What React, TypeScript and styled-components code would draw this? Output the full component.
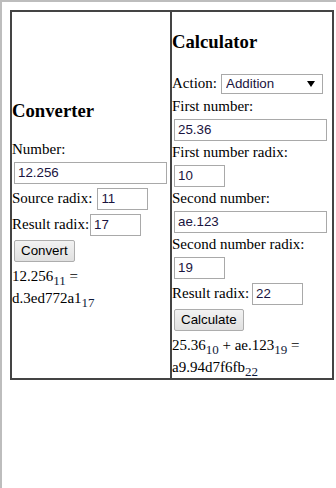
import styled, { createGlobalStyle } from 'styled-components'

const GlobalStyle = createGlobalStyle`
  html, body {
    margin: 0;
    padding: 0;
    background: #fff;
  }
  body {
    font-family: 'Liberation Serif', 'Times New Roman', serif;
    font-size: 15px;
    color: #000;
  }
`

const Frame = styled.div`
  box-sizing: border-box;
  min-height: 100vh;
  border-top: 2px solid #bdbdbd;
  border-left: 2px solid #bdbdbd;
  padding: 8px;
`

const Layout = styled.table`
  border-collapse: collapse;
  border: 2px solid #444;
  table-layout: fixed;
  width: 322px;
`

const Cell = styled.td<{ $width: number }>`
  border: 2px solid #444;
  padding: 0;
  width: ${({ $width }) => $width}px;
  vertical-align: middle;
`

const Title = styled.h3`
  margin: 18.72px 0;
  font-size: 18.72px;
  line-height: 21.5px;
  font-weight: bold;
`

const Line = styled.div<{ $h?: number }>`
  display: flex;
  align-items: center;
  height: ${({ $h }) => $h ?? 26}px;
  white-space: nowrap;
  font-size: 15px;
`

const Field = styled.input<{ $w: number; $ml?: number }>`
  box-sizing: border-box;
  width: ${({ $w }) => $w}px;
  height: 22px;
  margin: 0 0 0 ${({ $ml }) => $ml ?? 2}px;
  padding: 0 3px;
  border: 1px solid #a9a9a9;
  font-family: 'Liberation Sans', Arial, sans-serif;
  font-size: 13.33px;
  color: #1a1440;
  background: #fff;
  outline: none;
`

const SelectWrap = styled.span<{ $ml: number }>`
  position: relative;
  display: inline-block;
  margin-left: ${({ $ml }) => $ml}px;
  &::after {
    content: '';
    position: absolute;
    right: 8px;
    top: 7px;
    border-left: 4px solid transparent;
    border-right: 4px solid transparent;
    border-top: 6px solid #000;
    pointer-events: none;
  }
`

const Select = styled.select`
  appearance: none;
  box-sizing: border-box;
  width: 102px;
  height: 20px;
  margin: 0;
  padding: 0 4px;
  border: 1px solid #a9a9a9;
  border-radius: 0;
  background: #fff;
  font-family: 'Liberation Sans', Arial, sans-serif;
  font-size: 13.33px;
  color: #1a1440;
`

const Button = styled.button`
  box-sizing: border-box;
  height: 22px;
  margin-left: 2px;
  padding: 0 6px;
  border: 1px solid #adadad;
  border-radius: 2px;
  background: linear-gradient(#f2f2f2, #e0e0e0);
  font-family: 'Liberation Sans', Arial, sans-serif;
  font-size: 13.33px;
  color: #000;
`

const Result = styled.div`
  font-size: 15px;
  line-height: 22px;
  padding-top: 1px;
`

const Sub = styled.sub`
  font-size: 13px;
  line-height: 1;
  vertical-align: -4px;
  color: #10193a;
`

const App = () => {
  return (
    <Frame>
      <GlobalStyle />
      <Layout>
        <tbody>
          <tr>
            <Cell $width={158}>
              <Title>Converter</Title>
              <Line $h={20}>Number:</Line>
              <Line>
                <Field $w={153} defaultValue='12.256' />
              </Line>
              <Line>
                Source radix:
                <Field $w={51} $ml={5} defaultValue='11' />
              </Line>
              <Line>
                Result radix:
                <Field $w={51} $ml={1} defaultValue='17' />
              </Line>
              <Line>
                <Button>Convert</Button>
              </Line>
              <Result>
                12.256<Sub>11</Sub> =
                <br />
                d.3ed772a1<Sub>17</Sub>
              </Result>
            </Cell>
            <Cell $width={160}>
              <Title>Calculator</Title>
              <Line>
                Action:
                <SelectWrap $ml={4}>
                  <Select defaultValue='add'>
                    <option value='add'>Addition</option>
                    <option value='sub'>Subtraction</option>
                    <option value='mul'>Multiplication</option>
                    <option value='div'>Division</option>
                  </Select>
                </SelectWrap>
              </Line>
              <Line $h={20}>First number:</Line>
              <Line>
                <Field $w={153} defaultValue='25.36' />
              </Line>
              <Line $h={20}>First number radix:</Line>
              <Line>
                <Field $w={51} defaultValue='10' />
              </Line>
              <Line $h={20}>Second number:</Line>
              <Line>
                <Field $w={153} defaultValue='ae.123' />
              </Line>
              <Line $h={20}>Second number radix:</Line>
              <Line>
                <Field $w={51} defaultValue='19' />
              </Line>
              <Line>
                Result radix:
                <Field $w={51} $ml={3} defaultValue='22' />
              </Line>
              <Line>
                <Button>Calculate</Button>
              </Line>
              <Result>
                25.36<Sub>10</Sub> + ae.123<Sub>19</Sub> =
                <br />
                a9.94d7f6fb<Sub>22</Sub>
              </Result>
            </Cell>
          </tr>
        </tbody>
      </Layout>
    </Frame>
  )
}

export default App
